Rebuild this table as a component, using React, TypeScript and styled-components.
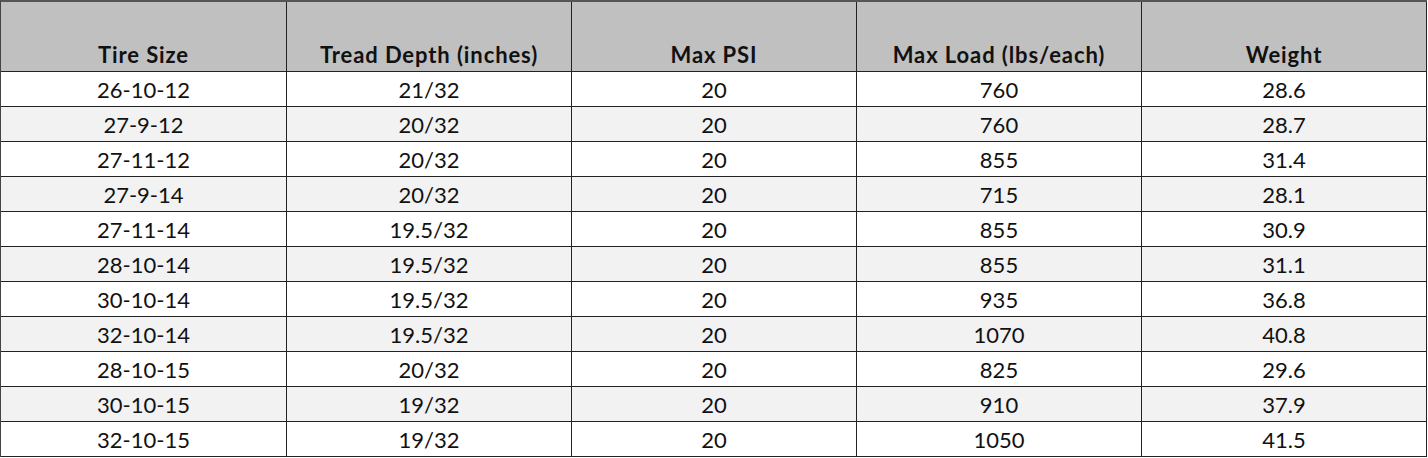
import React from "react";
import styled, { createGlobalStyle } from "styled-components";

const Global = createGlobalStyle`
  body {
    margin: 0;
    background: #fff;
  }
  * {
    box-sizing: border-box;
  }
`;

const rows = [
  ["26-10-12", "21/32", "20", "760", "28.6"],
  ["27-9-12", "20/32", "20", "760", "28.7"],
  ["27-11-12", "20/32", "20", "855", "31.4"],
  ["27-9-14", "20/32", "20", "715", "28.1"],
  ["27-11-14", "19.5/32", "20", "855", "30.9"],
  ["28-10-14", "19.5/32", "20", "855", "31.1"],
  ["30-10-14", "19.5/32", "20", "935", "36.8"],
  ["32-10-14", "19.5/32", "20", "1070", "40.8"],
  ["28-10-15", "20/32", "20", "825", "29.6"],
  ["30-10-15", "19/32", "20", "910", "37.9"],
  ["32-10-15", "19/32", "20", "1050", "41.5"],
];

const headers = ["Tire Size", "Tread Depth (inches)", "Max PSI", "Max Load (lbs/each)", "Weight"];

const Table = styled.div`
  width: 1427px;
  font-family: Lato, "Open Sans", sans-serif;
  font-size: 22px;
  color: #111;
  border-top: 2px solid #555;
  border-left: 1px solid #444;
`;

const Row = styled.div<{ $shade?: boolean; $head?: boolean }>`
  display: grid;
  grid-template-columns: 286px repeat(4, 285px);
  height: ${(p) => (p.$head ? "70px" : "35px")};
  background: ${(p) => (p.$head ? "#c0c0c0" : p.$shade ? "#f2f2f2" : "#fff")};
`;

const Cell = styled.div`
  display: flex;
  align-items: center;
  justify-content: center;
  border-right: 1px solid #222;
  border-bottom: 1px solid #222;
  padding-top: 1px;
`;

const HeadCell = styled(Cell)`
  align-items: flex-end;
  padding: 0 0 3px;
  font-weight: 700;
  letter-spacing: 0.9px;
`;

const App: React.FC = () => (
  <>
    <Global />
    <Table>
      <Row $head>
        {headers.map((h) => (
          <HeadCell key={h}>{h}</HeadCell>
        ))}
      </Row>
      {rows.map((r, i) => (
        <Row key={r[0]} $shade={i % 2 === 1}>
          {r.map((v, j) => (
            <Cell key={j}>{v}</Cell>
          ))}
        </Row>
      ))}
    </Table>
  </>
);

export default App;
